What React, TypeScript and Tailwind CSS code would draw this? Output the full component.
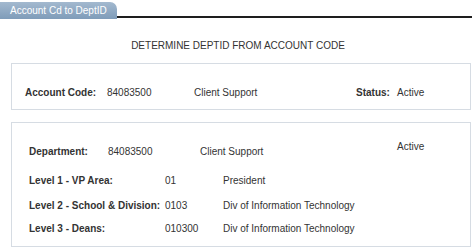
import React from "react";

export default function App() {
  const font = { fontFamily: '"Liberation Sans", Arial, sans-serif' };
  return (
    <div className="w-[474px] h-[249px] bg-white text-[#333] text-[10px] leading-[14px] overflow-hidden" style={font}>
      {/* Tab bar */}
      <div className="flex items-end h-[19px] pt-[2px]">
        <div className="w-[117px] h-[17px] rounded-tr-[7px] bg-gradient-to-b from-[#a3b9cf] to-[#7f9cb9] text-white pl-[10px] flex items-center">
          Account Cd to DeptID
        </div>
        <div className="w-[355px] h-[2px] bg-[#1e1e1e] mb-[1px]" />
      </div>

      {/* Title */}
      <div className="text-center mt-[20px] pl-[2px] h-[14px]">DETERMINE DEPTID FROM ACCOUNT CODE</div>

      {/* Box 1 */}
      <div className="ml-[11px] mt-[10px] w-[460px] h-[47px] border border-[#d6dce3] pt-[22px] pl-[13px] flex">
        <div className="w-[82px] font-bold">Account Code:</div>
        <div className="w-[87px]">84083500</div>
        <div className="w-[162px]">Client Support</div>
        <div className="w-[41px] font-bold">Status:</div>
        <div>Active</div>
      </div>

      {/* Box 2 */}
      <div className="ml-[11px] mt-[12px] w-[460px] h-[125px] border border-[#d6dce3] pt-[22px] pl-[17px] flex flex-col">
        <div className="flex">
          <div className="w-[79px] font-bold">Department:</div>
          <div className="w-[92px]">84083500</div>
          <div className="w-[197px]">Client Support</div>
          <div className="-mt-[5px]">Active</div>
        </div>
        <div className="flex mt-[15px]">
          <div className="w-[136px] font-bold">Level 1 - VP Area:</div>
          <div className="w-[58px]">01</div>
          <div>President</div>
        </div>
        <div className="flex mt-[11px]">
          <div className="w-[136px] font-bold">Level 2 - School &amp; Division:</div>
          <div className="w-[58px]">0103</div>
          <div>Div of Information Technology</div>
        </div>
        <div className="flex mt-[9px]">
          <div className="w-[136px] font-bold">Level 3 - Deans:</div>
          <div className="w-[58px]">010300</div>
          <div>Div of Information Technology</div>
        </div>
      </div>
    </div>
  );
}
